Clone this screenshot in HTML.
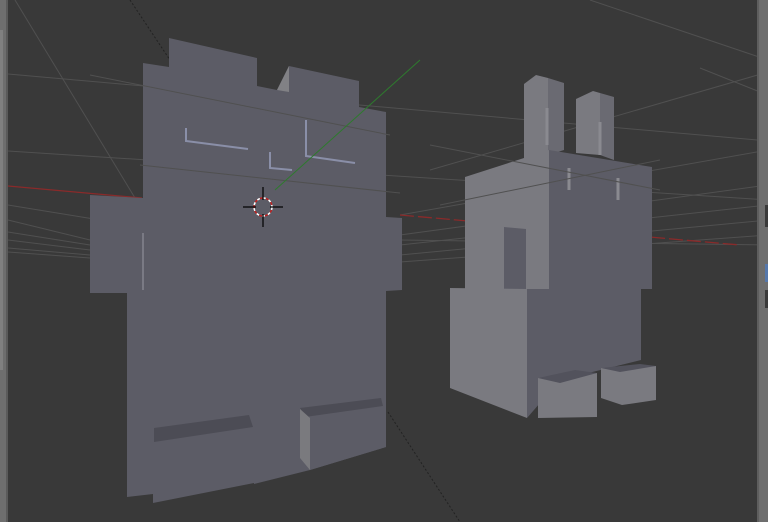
<!DOCTYPE html>
<html><head><style>
html,body{margin:0;padding:0;background:#393939;width:768px;height:522px;overflow:hidden}
</style></head><body>
<svg width="768" height="522" viewBox="0 0 768 522" xmlns="http://www.w3.org/2000/svg" style="position:absolute;left:0;top:0">
<rect width="768" height="522" fill="#393939"/>
<g stroke="#505050" stroke-width="1" fill="none">
<line x1="8" y1="74" x2="768" y2="141"/>
<line x1="8" y1="151" x2="768" y2="200"/>
<line x1="15" y1="0" x2="135" y2="198"/>
<line x1="8" y1="205" x2="100" y2="220"/>
<line x1="8" y1="220" x2="90" y2="240"/>
<line x1="8" y1="232" x2="90" y2="245"/>
<line x1="8" y1="240" x2="90" y2="250"/>
<line x1="8" y1="248" x2="90" y2="255"/>
<line x1="8" y1="252" x2="90" y2="258"/>
<line x1="400" y1="215" x2="768" y2="150"/>
<line x1="400" y1="235" x2="768" y2="185"/>
<line x1="400" y1="245" x2="768" y2="205"/>
<line x1="400" y1="255" x2="768" y2="220"/>
<line x1="400" y1="262" x2="768" y2="235"/>
<line x1="430" y1="170" x2="768" y2="72"/>
<line x1="700" y1="68" x2="760" y2="92"/>
<line x1="590" y1="0" x2="768" y2="60"/>
<line x1="400" y1="240" x2="768" y2="245"/>
</g>
<line x1="130" y1="0" x2="170" y2="60" stroke="#222" stroke-dasharray="2,2"/>
<line x1="388" y1="412" x2="460" y2="522" stroke="#222" stroke-dasharray="2,2"/>
<line x1="8" y1="186" x2="142" y2="198" stroke="#8a2a2a" stroke-width="1.3"/>
<line x1="400" y1="215" x2="740" y2="245" stroke="#8a2a2a" stroke-width="1.3" stroke-dasharray="14,4"/>
<polygon fill="#5c5c66" points="143,63 169,67 169,38 257,58 257,86 277,90 289,66 359,81 359,107 386,112 386,217 402,218 402,290 386,291 386,447 310,470 254,484 254,483 153,503 153,494 127,497 127,293 90,293 90,195 143,198"/>
<polygon fill="#818185" points="277,90 289,66 289,92"/>
<polygon fill="#4c4c55" points="154,428 249,415 253,427 154,442"/>
<polygon fill="#5c5c66" points="301,408 383,398 386,447 310,470"/>
<polygon fill="#4c4c55" points="300,408 381,398 383,406 305,417"/>
<polygon fill="#7a7a7e" points="300,409 310,418 310,470 300,458"/>
<g stroke="#8a8fa8" stroke-width="2" fill="none">
<polyline points="186,128 186,141 248,149"/>
<polyline points="270,152 270,168 292,170"/>
<polyline points="306,120 306,156 355,163"/>
<line x1="143" y1="233" x2="143" y2="290" stroke="#7a7a84"/>
</g>
<g stroke="#505050" fill="none"><line x1="90" y1="75" x2="390" y2="135"/><line x1="140" y1="165" x2="400" y2="193"/></g>
<line x1="275" y1="190" x2="420" y2="60" stroke="#2e7a2e" stroke-width="1"/>
<circle cx="263" cy="207" r="9" fill="none" stroke="#fff" stroke-width="1.5" stroke-dasharray="3,3"/>
<circle cx="263" cy="207" r="9" fill="none" stroke="#c02020" stroke-width="1.5" stroke-dasharray="3,3" stroke-dashoffset="3"/>
<g stroke="#000" stroke-width="1.2"><line x1="243" y1="207" x2="256" y2="207"/><line x1="270" y1="207" x2="283" y2="207"/><line x1="263" y1="187" x2="263" y2="200"/><line x1="263" y1="214" x2="263" y2="227"/></g>
<!-- bunny -->
<polygon fill="#7a7a80" points="524,84 536,75 548,78 548,160 524,160"/>
<polygon fill="#6a6a72" points="548,78 564,83 564,150 548,155"/>
<polygon fill="#7a7a80" points="576,99 593,91 600,93 600,155 576,153"/>
<polygon fill="#6a6a72" points="600,93 614,97 614,160 600,155"/>
<polygon fill="#7a7a80" points="465,177 549,150 549,289 465,289"/>
<polygon fill="#5c5c66" points="549,150 652,167 652,289 549,289"/>
<polygon fill="#5c5c66" points="504,227 526,229 526,289 504,289"/>
<polygon fill="#7a7a80" points="450,288 527,289 527,418 450,388"/>
<polygon fill="#5c5c66" points="527,289 641,289 641,360 560,380 527,418"/>
<polygon fill="#7a7a80" points="538,378 597,373 597,417 538,418"/>
<polygon fill="#52525c" points="538,378 575,370 597,373 560,383"/>
<polygon fill="#7a7a80" points="601,368 656,366 656,400 622,405 601,398"/>
<polygon fill="#52525c" points="601,368 640,364 656,366 620,372"/>
<g stroke="#8a8a90" stroke-width="3"><line x1="547" y1="108" x2="547" y2="145"/><line x1="600" y1="122" x2="600" y2="155"/><line x1="569" y1="168" x2="569" y2="190"/><line x1="618" y1="178" x2="618" y2="200"/></g>
<g stroke="#505050" fill="none"><line x1="430" y1="145" x2="660" y2="190"/><line x1="440" y1="205" x2="660" y2="160"/></g>
<rect x="0" y="0" width="8" height="522" fill="#6e6e6e"/>
<rect x="0" y="30" width="3" height="340" fill="#808080"/>
<rect x="6" y="0" width="2" height="522" fill="#5a5a5a"/>
<rect x="757" y="0" width="11" height="522" fill="#6e6e6e"/>
<rect x="757" y="0" width="2" height="522" fill="#5e5e5e"/>
<rect x="765" y="205" width="3" height="22" fill="#3a3a3a"/>
<rect x="765" y="264" width="3" height="18" fill="#5577aa"/>
<rect x="765" y="290" width="3" height="18" fill="#3a3a3a"/>
</svg>
</body></html>
